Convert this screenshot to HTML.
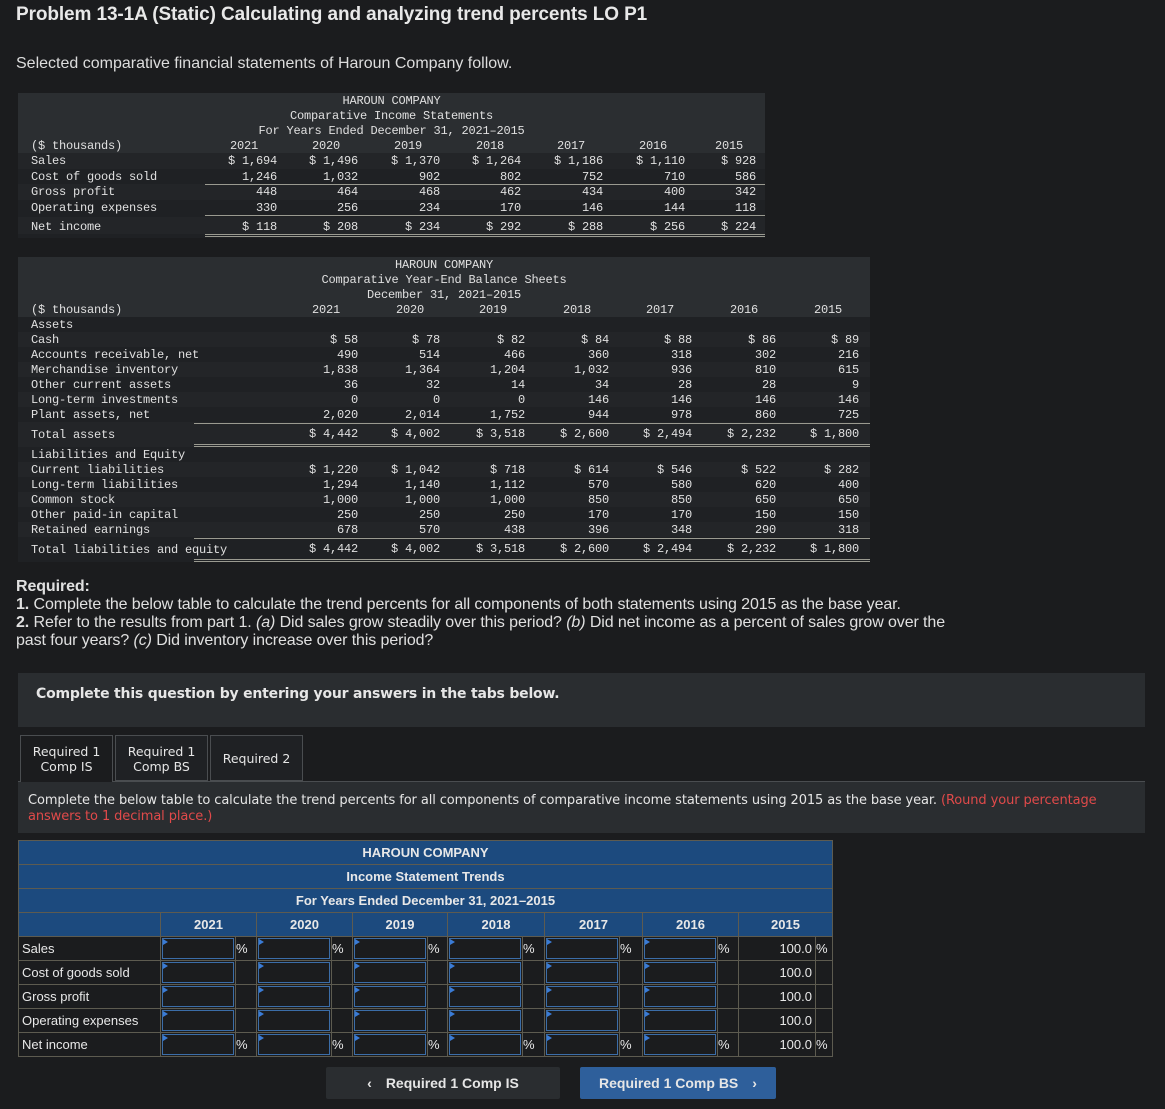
<!DOCTYPE html>
<html><head><meta charset="utf-8">
<style>
*{margin:0;padding:0;box-sizing:border-box}
body{width:1165px;height:1109px;background:#1b1c1e;color:#e6e6e6;font-family:"Liberation Sans",sans-serif;position:relative;overflow:hidden}
.a{position:absolute;white-space:nowrap}
.mono{font-family:"Liberation Mono",monospace;font-size:12px;letter-spacing:-0.2px;color:#e0e0e0}
.r{text-align:right;width:90px}
.c{text-align:center}
.row{position:absolute;left:0;right:0}
.ln{position:absolute;height:1px;background:#9a9a90}
.bt td{border:1px solid #5d5b50}
.bt{border-collapse:collapse;position:absolute;left:18px;top:840px;width:815px;font-family:"Liberation Sans",sans-serif;font-size:13px;color:#e8e8e8}
.bt .h{background:#1c4a7e;text-align:center;font-weight:bold;height:24px}
.bt .y td{background:#1c4a7e;height:24px;text-align:center;font-weight:bold}
.bt .d td{height:24px;background:#1b1c1e}
.in{position:relative}
.in div{position:absolute;left:1px;top:1px;right:1px;bottom:1px;border:1px solid #3b6da8;background:#1b1c1e}
.in div:before{content:"";position:absolute;left:0;top:0;border-left:5px solid #3a7bd5;border-top:3px solid transparent;border-bottom:3px solid transparent}
.dv{font-family:"DejaVu Sans","Liberation Sans",sans-serif}
</style></head><body>

<div class="a" style="left:16px;top:4px;font-size:19px;font-weight:bold;color:#e8e8e8;letter-spacing:-0.1px">Problem 13-1A (Static) Calculating and analyzing trend percents LO P1</div>
<div class="a" style="left:16px;top:55px;font-size:16px;color:#ddd">Selected comparative financial statements of Haroun Company follow.</div>

<!-- Income statement -->
<div class="a mono" style="left:18px;top:93px;width:747px;height:145px;background:#1f2124">
  <div class="row" style="top:0;height:60px;background:#2b2e31"></div>
  <div class="row" style="top:60px;height:16px;background:#232528"></div>
  <div class="row" style="top:91px;height:16px;background:#232528"></div>
  <div class="row" style="top:124px;height:17px;background:#232528"></div>
  <div class="a c" style="left:0;width:747px;top:1px">HAROUN COMPANY</div>
  <div class="a c" style="left:0;width:747px;top:16px">Comparative Income Statements</div>
  <div class="a c" style="left:0;width:747px;top:31px">For Years Ended December 31, 2021–2015</div>
  <div class="a" style="left:13px;top:46px">($ thousands)</div>
  <div class="a" style="left:212px;top:46px">2021</div><div class="a" style="left:294px;top:46px">2020</div><div class="a" style="left:376px;top:46px">2019</div><div class="a" style="left:458px;top:46px">2018</div><div class="a" style="left:539px;top:46px">2017</div><div class="a" style="left:621px;top:46px">2016</div><div class="a" style="left:697px;top:46px">2015</div>
  <div class="a" style="left:13px;top:61px">Sales</div>
  <div class="a" style="left:13px;top:77px">Cost of goods sold</div>
  <div class="a" style="left:13px;top:92px">Gross profit</div>
  <div class="a" style="left:13px;top:108px">Operating expenses</div>
  <div class="a" style="left:13px;top:127px">Net income</div>
  <div class="ln" style="left:187px;width:560px;top:91px"></div>
  <div class="ln" style="left:187px;width:560px;top:122px"></div>
  <div class="ln" style="left:187px;width:560px;top:141px"></div>
  <div class="ln" style="left:187px;width:560px;top:143px"></div>
</div>
<div class="a mono" style="left:0;top:0">
<div class="a r" style="left:187px;top:154px">$ 1,694</div><div class="a r" style="left:268px;top:154px">$ 1,496</div><div class="a r" style="left:350px;top:154px">$ 1,370</div><div class="a r" style="left:431px;top:154px">$ 1,264</div><div class="a r" style="left:513px;top:154px">$ 1,186</div><div class="a r" style="left:595px;top:154px">$ 1,110</div><div class="a r" style="left:666px;top:154px">$ 928</div>
<div class="a r" style="left:187px;top:170px">1,246</div><div class="a r" style="left:268px;top:170px">1,032</div><div class="a r" style="left:350px;top:170px">902</div><div class="a r" style="left:431px;top:170px">802</div><div class="a r" style="left:513px;top:170px">752</div><div class="a r" style="left:595px;top:170px">710</div><div class="a r" style="left:666px;top:170px">586</div>
<div class="a r" style="left:187px;top:185px">448</div><div class="a r" style="left:268px;top:185px">464</div><div class="a r" style="left:350px;top:185px">468</div><div class="a r" style="left:431px;top:185px">462</div><div class="a r" style="left:513px;top:185px">434</div><div class="a r" style="left:595px;top:185px">400</div><div class="a r" style="left:666px;top:185px">342</div>
<div class="a r" style="left:187px;top:201px">330</div><div class="a r" style="left:268px;top:201px">256</div><div class="a r" style="left:350px;top:201px">234</div><div class="a r" style="left:431px;top:201px">170</div><div class="a r" style="left:513px;top:201px">146</div><div class="a r" style="left:595px;top:201px">144</div><div class="a r" style="left:666px;top:201px">118</div>
<div class="a r" style="left:187px;top:220px">$ 118</div><div class="a r" style="left:268px;top:220px">$ 208</div><div class="a r" style="left:350px;top:220px">$ 234</div><div class="a r" style="left:431px;top:220px">$ 292</div><div class="a r" style="left:513px;top:220px">$ 288</div><div class="a r" style="left:595px;top:220px">$ 256</div><div class="a r" style="left:666px;top:220px">$ 224</div>
</div>

<!-- Balance sheet -->
<div class="a mono" style="left:18px;top:257px;width:852px;height:305px;background:#1f2124">
  <div class="row" style="top:0;height:60px;background:#2b2e31"></div>
  <div class="row" style="top:75px;height:15px;background:#232528"></div>
  <div class="row" style="top:105px;height:15px;background:#232528"></div>
  <div class="row" style="top:135px;height:15px;background:#232528"></div>
  <div class="row" style="top:165px;height:25px;background:#232528"></div>
  <div class="row" style="top:205px;height:15px;background:#232528"></div>
  <div class="row" style="top:235px;height:15px;background:#232528"></div>
  <div class="row" style="top:265px;height:15px;background:#232528"></div>
  <div class="a c" style="left:0;width:852px;top:1px">HAROUN COMPANY</div>
  <div class="a c" style="left:0;width:852px;top:16px">Comparative Year-End Balance Sheets</div>
  <div class="a c" style="left:0;width:852px;top:31px">December 31, 2021–2015</div>
  <div class="a" style="left:13px;top:46px">($ thousands)</div>
  <div class="a" style="left:294px;top:46px">2021</div><div class="a" style="left:378px;top:46px">2020</div><div class="a" style="left:461px;top:46px">2019</div><div class="a" style="left:545px;top:46px">2018</div><div class="a" style="left:628px;top:46px">2017</div><div class="a" style="left:712px;top:46px">2016</div><div class="a" style="left:796px;top:46px">2015</div>
  <div class="a" style="left:13px;top:61px">Assets</div>
  <div class="a" style="left:13px;top:76px">Cash</div>
  <div class="a" style="left:13px;top:91px">Accounts receivable, net</div>
  <div class="a" style="left:13px;top:106px">Merchandise inventory</div>
  <div class="a" style="left:13px;top:121px">Other current assets</div>
  <div class="a" style="left:13px;top:136px">Long-term investments</div>
  <div class="a" style="left:13px;top:151px">Plant assets, net</div>
  <div class="a" style="left:13px;top:171px">Total assets</div>
  <div class="a" style="left:13px;top:191px">Liabilities and Equity</div>
  <div class="a" style="left:13px;top:206px">Current liabilities</div>
  <div class="a" style="left:13px;top:221px">Long-term liabilities</div>
  <div class="a" style="left:13px;top:236px">Common stock</div>
  <div class="a" style="left:13px;top:251px">Other paid-in capital</div>
  <div class="a" style="left:13px;top:266px">Retained earnings</div>
  <div class="a" style="left:13px;top:286px">Total liabilities and equity</div>
  <div class="ln" style="left:176px;width:676px;top:166px"></div>
  <div class="ln" style="left:176px;width:676px;top:187px"></div>
  <div class="ln" style="left:176px;width:676px;top:189px"></div>
  <div class="ln" style="left:176px;width:676px;top:281px"></div>
  <div class="ln" style="left:176px;width:676px;top:302px"></div>
  <div class="ln" style="left:176px;width:676px;top:304px"></div>
</div>
<div class="a mono" style="left:0;top:0">
<div class="a r" style="left:268px;top:333px">$ 58</div><div class="a r" style="left:350px;top:333px">$ 78</div><div class="a r" style="left:435px;top:333px">$ 82</div><div class="a r" style="left:519px;top:333px">$ 84</div><div class="a r" style="left:602px;top:333px">$ 88</div><div class="a r" style="left:686px;top:333px">$ 86</div><div class="a r" style="left:769px;top:333px">$ 89</div>
<div class="a r" style="left:268px;top:348px">490</div><div class="a r" style="left:350px;top:348px">514</div><div class="a r" style="left:435px;top:348px">466</div><div class="a r" style="left:519px;top:348px">360</div><div class="a r" style="left:602px;top:348px">318</div><div class="a r" style="left:686px;top:348px">302</div><div class="a r" style="left:769px;top:348px">216</div>
<div class="a r" style="left:268px;top:363px">1,838</div><div class="a r" style="left:350px;top:363px">1,364</div><div class="a r" style="left:435px;top:363px">1,204</div><div class="a r" style="left:519px;top:363px">1,032</div><div class="a r" style="left:602px;top:363px">936</div><div class="a r" style="left:686px;top:363px">810</div><div class="a r" style="left:769px;top:363px">615</div>
<div class="a r" style="left:268px;top:378px">36</div><div class="a r" style="left:350px;top:378px">32</div><div class="a r" style="left:435px;top:378px">14</div><div class="a r" style="left:519px;top:378px">34</div><div class="a r" style="left:602px;top:378px">28</div><div class="a r" style="left:686px;top:378px">28</div><div class="a r" style="left:769px;top:378px">9</div>
<div class="a r" style="left:268px;top:393px">0</div><div class="a r" style="left:350px;top:393px">0</div><div class="a r" style="left:435px;top:393px">0</div><div class="a r" style="left:519px;top:393px">146</div><div class="a r" style="left:602px;top:393px">146</div><div class="a r" style="left:686px;top:393px">146</div><div class="a r" style="left:769px;top:393px">146</div>
<div class="a r" style="left:268px;top:408px">2,020</div><div class="a r" style="left:350px;top:408px">2,014</div><div class="a r" style="left:435px;top:408px">1,752</div><div class="a r" style="left:519px;top:408px">944</div><div class="a r" style="left:602px;top:408px">978</div><div class="a r" style="left:686px;top:408px">860</div><div class="a r" style="left:769px;top:408px">725</div>
<div class="a r" style="left:268px;top:427px">$ 4,442</div><div class="a r" style="left:350px;top:427px">$ 4,002</div><div class="a r" style="left:435px;top:427px">$ 3,518</div><div class="a r" style="left:519px;top:427px">$ 2,600</div><div class="a r" style="left:602px;top:427px">$ 2,494</div><div class="a r" style="left:686px;top:427px">$ 2,232</div><div class="a r" style="left:769px;top:427px">$ 1,800</div>
<div class="a r" style="left:268px;top:463px">$ 1,220</div><div class="a r" style="left:350px;top:463px">$ 1,042</div><div class="a r" style="left:435px;top:463px">$ 718</div><div class="a r" style="left:519px;top:463px">$ 614</div><div class="a r" style="left:602px;top:463px">$ 546</div><div class="a r" style="left:686px;top:463px">$ 522</div><div class="a r" style="left:769px;top:463px">$ 282</div>
<div class="a r" style="left:268px;top:478px">1,294</div><div class="a r" style="left:350px;top:478px">1,140</div><div class="a r" style="left:435px;top:478px">1,112</div><div class="a r" style="left:519px;top:478px">570</div><div class="a r" style="left:602px;top:478px">580</div><div class="a r" style="left:686px;top:478px">620</div><div class="a r" style="left:769px;top:478px">400</div>
<div class="a r" style="left:268px;top:493px">1,000</div><div class="a r" style="left:350px;top:493px">1,000</div><div class="a r" style="left:435px;top:493px">1,000</div><div class="a r" style="left:519px;top:493px">850</div><div class="a r" style="left:602px;top:493px">850</div><div class="a r" style="left:686px;top:493px">650</div><div class="a r" style="left:769px;top:493px">650</div>
<div class="a r" style="left:268px;top:508px">250</div><div class="a r" style="left:350px;top:508px">250</div><div class="a r" style="left:435px;top:508px">250</div><div class="a r" style="left:519px;top:508px">170</div><div class="a r" style="left:602px;top:508px">170</div><div class="a r" style="left:686px;top:508px">150</div><div class="a r" style="left:769px;top:508px">150</div>
<div class="a r" style="left:268px;top:523px">678</div><div class="a r" style="left:350px;top:523px">570</div><div class="a r" style="left:435px;top:523px">438</div><div class="a r" style="left:519px;top:523px">396</div><div class="a r" style="left:602px;top:523px">348</div><div class="a r" style="left:686px;top:523px">290</div><div class="a r" style="left:769px;top:523px">318</div>
<div class="a r" style="left:268px;top:542px">$ 4,442</div><div class="a r" style="left:350px;top:542px">$ 4,002</div><div class="a r" style="left:435px;top:542px">$ 3,518</div><div class="a r" style="left:519px;top:542px">$ 2,600</div><div class="a r" style="left:602px;top:542px">$ 2,494</div><div class="a r" style="left:686px;top:542px">$ 2,232</div><div class="a r" style="left:769px;top:542px">$ 1,800</div>
</div>

<div class="a" style="left:16px;top:578px;font-size:16px;line-height:18px;color:#e0e0e0;letter-spacing:-0.1px">
<b>Required:</b><br>
<b>1.</b> Complete the below table to calculate the trend percents for all components of both statements using 2015 as the base year.<br>
<b>2.</b> Refer to the results from part 1. <i>(a)</i> Did sales grow steadily over this period? <i>(b)</i> Did net income as a percent of sales grow over the<br>past four years? <i>(c)</i> Did inventory increase over this period?
</div>

<div class="a" style="left:18px;top:673px;width:1127px;height:54px;background:#2a2d30"></div>
<div class="a dv" style="left:36px;top:686px;font-size:14px;font-weight:bold;color:#e6e6e6;letter-spacing:-0.2px">Complete this question by entering your answers in the tabs below.</div>

<div class="a" style="left:18px;top:781px;width:1127px;height:52px;background:#2a2d30;border-top:1px solid #4a4d50"></div>
<div class="a c dv" style="left:20px;top:735px;width:93px;height:47px;border:1px solid #4a4d50;border-bottom:none;background:#1b1c1e;font-size:12.5px;line-height:15px;padding-top:8px">Required 1<br>Comp IS</div>
<div class="a c dv" style="left:115px;top:735px;width:93px;height:46px;border:1px solid #4a4d50;background:#1f2124;font-size:12.5px;line-height:15px;padding-top:8px">Required 1<br>Comp BS</div>
<div class="a c dv" style="left:210px;top:735px;width:93px;height:46px;border:1px solid #4a4d50;background:#1f2124;font-size:12.5px;line-height:46px">Required 2</div>
<div class="a dv" style="left:28px;top:793px;font-size:13px;line-height:16px;color:#e6e6e6;letter-spacing:-0.1px">Complete the below table to calculate the trend percents for all components of comparative income statements using 2015 as the base year. <span style="color:#e04a4a">(Round your percentage<br>answers to 1 decimal place.)</span></div>

<table class="bt">
<colgroup><col style="width:142px"><col style="width:75px"><col style="width:21px"><col style="width:75px"><col style="width:21px"><col style="width:75px"><col style="width:20px"><col style="width:75px"><col style="width:22px"><col style="width:75px"><col style="width:23px"><col style="width:75px"><col style="width:21px"><col style="width:77px"><col style="width:17px"></colgroup>
<tr><td class="h" colspan="15">HAROUN COMPANY</td></tr>
<tr><td class="h" colspan="15">Income Statement Trends</td></tr>
<tr><td class="h" colspan="15">For Years Ended December 31, 2021–2015</td></tr>
<tr class="y"><td></td><td colspan="2">2021</td><td colspan="2">2020</td><td colspan="2">2019</td><td colspan="2">2018</td><td colspan="2">2017</td><td colspan="2">2016</td><td colspan="2">2015</td></tr>
<tr class="d"><td style="padding-left:3px">Sales</td><td class="in"><div></div></td><td>%</td><td class="in"><div></div></td><td>%</td><td class="in"><div></div></td><td>%</td><td class="in"><div></div></td><td>%</td><td class="in"><div></div></td><td>%</td><td class="in"><div></div></td><td>%</td><td style="text-align:right;padding-right:3px">100.0</td><td>%</td></tr>
<tr class="d"><td style="padding-left:3px">Cost of goods sold</td><td class="in"><div></div></td><td></td><td class="in"><div></div></td><td></td><td class="in"><div></div></td><td></td><td class="in"><div></div></td><td></td><td class="in"><div></div></td><td></td><td class="in"><div></div></td><td></td><td style="text-align:right;padding-right:3px">100.0</td><td></td></tr>
<tr class="d"><td style="padding-left:3px">Gross profit</td><td class="in"><div></div></td><td></td><td class="in"><div></div></td><td></td><td class="in"><div></div></td><td></td><td class="in"><div></div></td><td></td><td class="in"><div></div></td><td></td><td class="in"><div></div></td><td></td><td style="text-align:right;padding-right:3px">100.0</td><td></td></tr>
<tr class="d"><td style="padding-left:3px">Operating expenses</td><td class="in"><div></div></td><td></td><td class="in"><div></div></td><td></td><td class="in"><div></div></td><td></td><td class="in"><div></div></td><td></td><td class="in"><div></div></td><td></td><td class="in"><div></div></td><td></td><td style="text-align:right;padding-right:3px">100.0</td><td></td></tr>
<tr class="d"><td style="padding-left:3px">Net income</td><td class="in"><div></div></td><td>%</td><td class="in"><div></div></td><td>%</td><td class="in"><div></div></td><td>%</td><td class="in"><div></div></td><td>%</td><td class="in"><div></div></td><td>%</td><td class="in"><div></div></td><td>%</td><td style="text-align:right;padding-right:3px">100.0</td><td>%</td></tr>
</table>

<div class="a c" style="left:326px;top:1067px;width:234px;height:32px;background:#2a2d30;border-radius:2px;font-size:14px;font-weight:bold;line-height:32px;color:#e6e6e6"><span style="margin-right:14px">&lsaquo;</span>Required 1 Comp IS</div>
<div class="a c" style="left:580px;top:1067px;width:196px;height:32px;background:#2e5f9b;border-radius:2px;font-size:14px;font-weight:bold;line-height:32px;color:#e6e6e6">Required 1 Comp BS<span style="margin-left:14px">&rsaquo;</span></div>
</body></html>
